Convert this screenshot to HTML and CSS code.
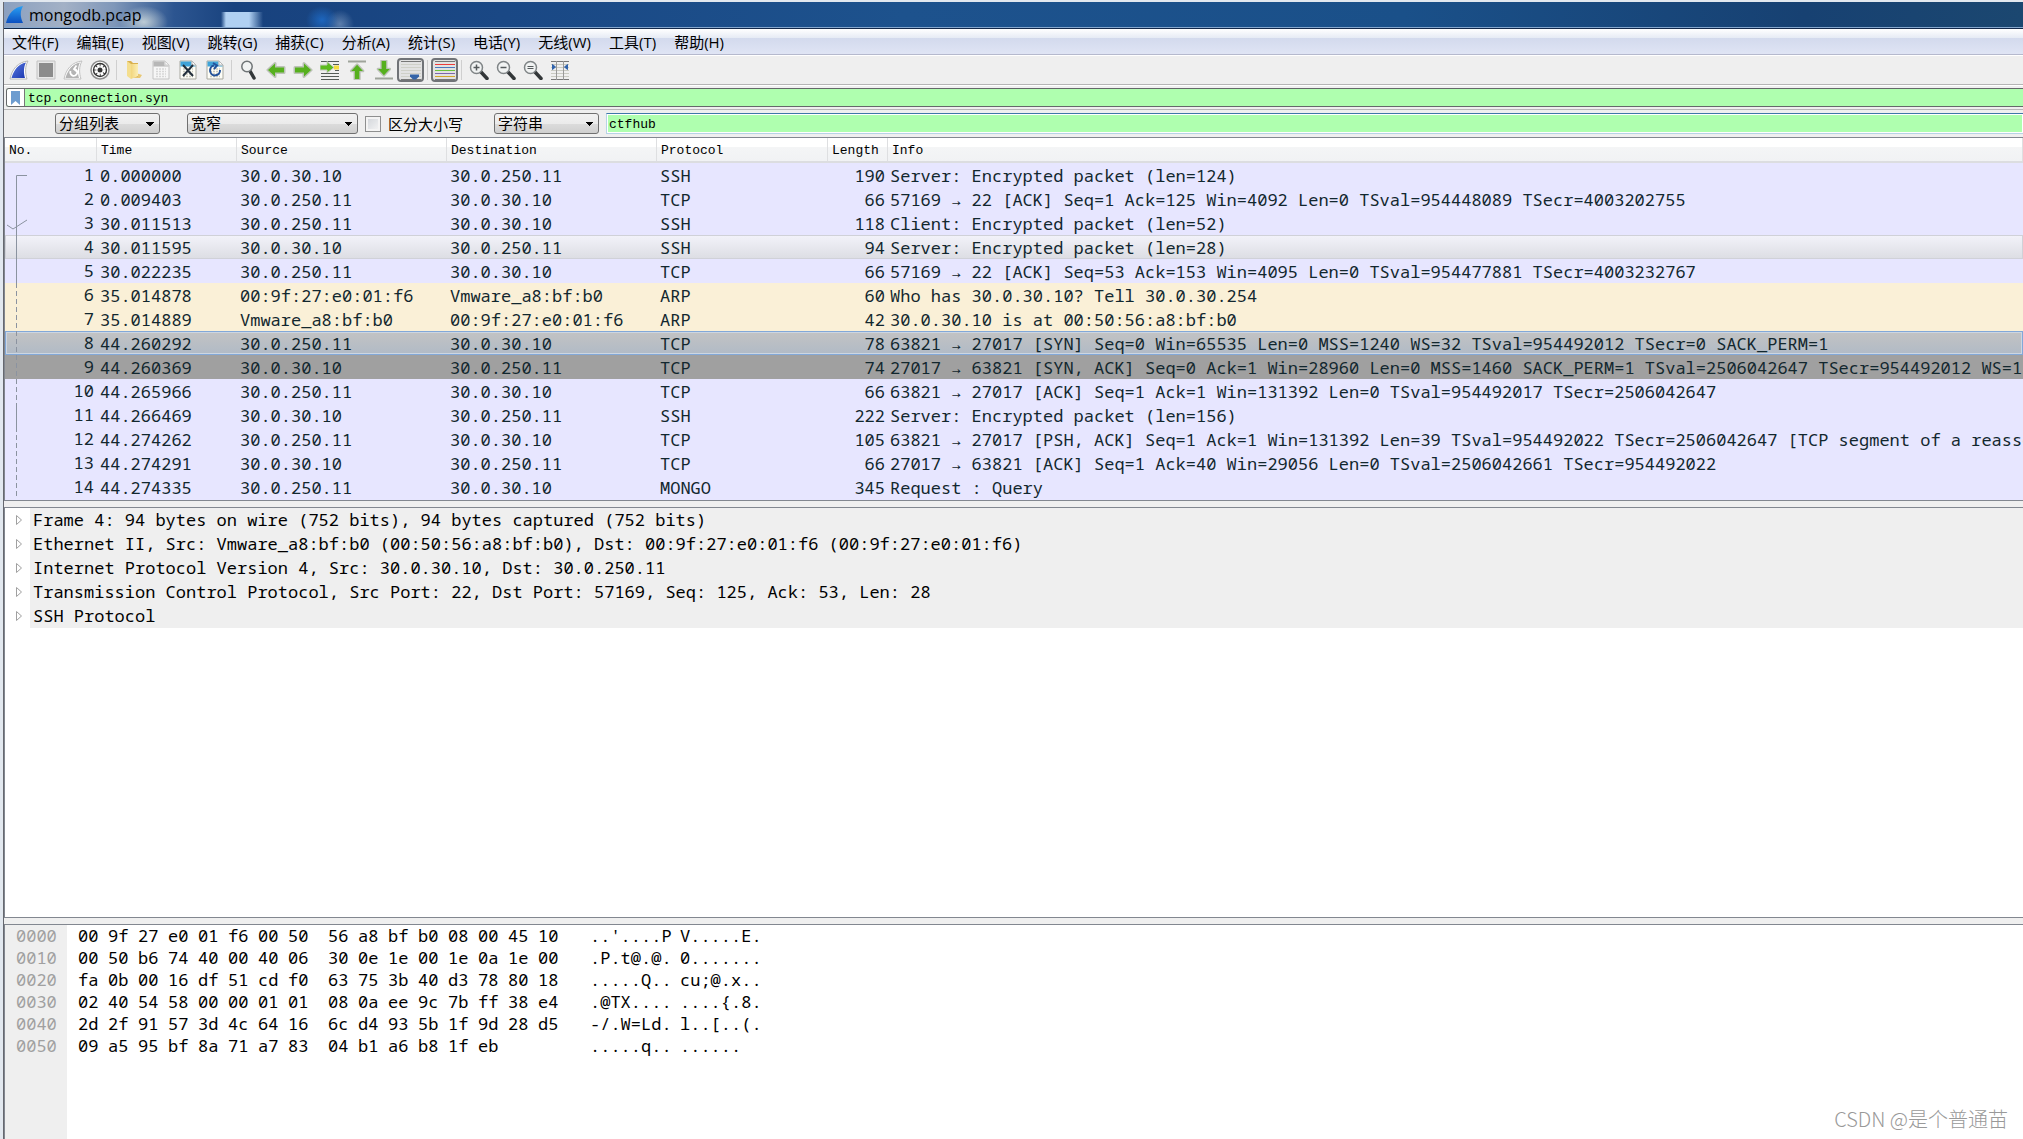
FILE: index.html
```html
<!DOCTYPE html>
<html lang="zh-CN">
<head>
<meta charset="utf-8">
<title>mongodb.pcap</title>
<link rel="stylesheet" href="styles.css">
</head>
<body>
<svg class="defs" aria-hidden="true">
  <defs>
    <linearGradient id="blueFin" x1="0" y1="0" x2="1" y2="1"><stop offset="0" stop-color="#5b7be0"/><stop offset="1" stop-color="#1a36b0"/></linearGradient>
    <linearGradient id="titleFin" x1="0" y1="0" x2="0" y2="1"><stop offset="0" stop-color="#2aa0f4"/><stop offset="1" stop-color="#0b4fc0"/></linearGradient>
    <linearGradient id="folder" x1="0" y1="0" x2="1" y2="0"><stop offset="0" stop-color="#f2d67e"/><stop offset="1" stop-color="#fbeeb4"/></linearGradient>
    <symbol id="line-first" viewBox="0 0 24 24"><path d="M22 12.5H11.500V24" fill="none" stroke="#8b93a0"/></symbol>
    <symbol id="line-solid" viewBox="0 0 24 24"><path d="M11.500 0V24" stroke="#8b93a0"/></symbol>
    <symbol id="line-check" viewBox="0 0 24 24"><path d="M11.500 0V24M2 14l6 4 14-9" fill="none" stroke="#8b93a0"/></symbol>
    <symbol id="line-dash" viewBox="0 0 24 24"><path d="M11.500 0V24" stroke="#8b93a0" stroke-dasharray="5 3"/></symbol>
    <symbol id="page" viewBox="0 0 20 20"><path d="M2 1h12l4 4v14H2z" fill="#fdfdf6" stroke="#a9a9a0"/><path d="M2.500 1.500h11v4h4v1h-15z" fill="#3fa3d8"/><path d="M14 1v4h4z" fill="#fff" stroke="#b5b5b5"/><path d="M5 9h10M5 11.500h10M5 14h10M5 16.500h10" stroke="#c9c9bc" stroke-width="1.500" stroke-dasharray="2 1"/></symbol>
    <symbol id="arrow" viewBox="0 0 20 20"><path d="M2 10l7-6.500v4h9v5H9v4z" fill="#56b01e" stroke="#bcc2b7" stroke-width="3" stroke-linejoin="round"/><path d="M2 10l7-6.500v4h9v5H9v4z" fill="#56b01e"/></symbol>
    <symbol id="lens" viewBox="0 0 20 20"><path d="M12 12l6 6.500" stroke="#333739" stroke-width="3.500" stroke-linecap="round"/><circle cx="7.500" cy="7.500" r="6" fill="#f1f3f3" stroke="#7f8486" stroke-width="1.500"/></symbol>
    <symbol id="twisty" viewBox="0 0 8 12"><path d="M1.500 1.500l5 4.500-5 4.500z" fill="#fff" stroke="#a0a0a0"/></symbol>
  </defs>
</svg>
<div class="window">
  <header class="titlebar">
    <svg class="app-icon" viewBox="0 0 20 20"><path d="M1 18C3 9 9 2 18 1c-3 5-3 11 0 17z" fill="url(#titleFin)"/></svg>
    <h1>mongodb.pcap</h1>
  </header>
  <nav class="menubar">
    <button>文件(F)</button><button>编辑(E)</button><button>视图(V)</button><button>跳转(G)</button><button>捕获(C)</button><button>分析(A)</button><button>统计(S)</button><button>电话(Y)</button><button>无线(W)</button><button>工具(T)</button><button>帮助(H)</button>
  </nav>
  <div class="toolbar">
    <button aria-label="开始捕获"><svg viewBox="0 0 20 20"><path d="M1 19C3 9 9 2 19 1c-3 5-3 12-1 18z" fill="#fff" stroke="#b8b8b8"/><path d="M2.500 18C5 10 9 4 17 2.500c-2.500 4.500-2.500 10.500-1 15.500z" fill="url(#blueFin)"/></svg></button>
    <button aria-label="停止捕获"><svg viewBox="0 0 20 20"><path d="M1 1h18v18H1z" fill="#e8e8e8" stroke="#c2c2c2"/><path d="M3 3h14v14H3z" fill="#8c8c8c"/></svg></button>
    <button aria-label="重新开始"><svg viewBox="0 0 20 20"><path d="M1 19C3 9 9 2 19 1c-3 5-3 12-1 18z" fill="#fff" stroke="#c2c2c2"/><path d="M2.500 18C5 10 9 4 17 2.500c-2.500 4.500-2.500 10.500-1 15.500z" fill="#b4b4b4"/><path d="M7.500 11a3.500 3.500 0 1 0 4.500-2M13.500 5.500L11 9l3 2.500" fill="none" stroke="#fff" stroke-width="1.800"/></svg></button>
    <button aria-label="捕获选项"><svg viewBox="0 0 20 20"><circle cx="10" cy="10" r="9" fill="#fff" stroke="#8e8e8e" stroke-width="1.500"/><circle cx="10" cy="10" r="7.200" fill="#333"/><circle cx="10" cy="10" r="4.500" fill="none" stroke="#fff" stroke-width="2.500" stroke-dasharray="2.700 .83"/><circle cx="10" cy="10" r="3.700" fill="#fff"/><circle cx="10" cy="10" r="2.500" fill="#333"/></svg></button>
    <i class="sep"></i>
    <button aria-label="打开"><svg viewBox="0 0 20 20"><path d="M12 13l6 2-2 3H8z" fill="#e9c873"/><path d="M3 1h4l2 2h5v14H5l-2-2z" fill="#d9b04f"/><path d="M3 1l4 3v15l-4-3z" fill="#f4de8e"/><path d="M7 4h7v12l-7 3z" fill="url(#folder)"/></svg></button>
    <button aria-label="保存"><svg class="faded" viewBox="0 0 20 20"><use href="#page"/></svg></button>
    <button aria-label="关闭"><svg viewBox="0 0 20 20"><use href="#page"/><path d="M5 5l10 11M15 5L5 16" stroke="#23303c" stroke-width="2"/></svg></button>
    <button aria-label="重新加载"><svg viewBox="0 0 20 20"><use href="#page"/><path d="M9 5.500a5 5 0 1 0 6 4.500M8 3l4 2.500L9 9" fill="none" stroke="#24539b" stroke-width="2"/></svg></button>
    <i class="sep"></i>
    <button aria-label="查找"><svg viewBox="0 0 20 20"><path d="M11 11l4 7" stroke="#333739" stroke-width="3.500" stroke-linecap="round"/><circle cx="8" cy="6.500" r="5.200" fill="#f1f3f3" stroke="#6f7476" stroke-width="1.500"/></svg></button>
    <button aria-label="后退"><svg viewBox="0 0 20 20"><use href="#arrow"/></svg></button>
    <button aria-label="前进"><svg viewBox="0 0 20 20"><use href="#arrow" transform="rotate(180 10 10)"/></svg></button>
    <button aria-label="转到分组"><svg viewBox="0 0 20 20"><path d="M1 1.500h18M1 13.500h18M1 16.500h18M1 19.500h18M13 4.500h6M15 10.500h4" stroke="#555b57"/><path d="M14 5.500h5v4h-5z" fill="#f6dc3e"/><path d="M0 5h7V1.500L14 7.500 7 13v-3H0z" fill="#5dbb1f" stroke="#c4c9bf"/></svg></button>
    <button aria-label="首个分组"><svg viewBox="0 0 20 20"><path d="M1 1.500h18" stroke="#9fa49b" stroke-width="2"/><use href="#arrow" transform="translate(0 2) rotate(90 10 10) scale(.9) translate(1 1)"/></svg></button>
    <button aria-label="最新分组"><svg viewBox="0 0 20 20"><path d="M1 18.500h18" stroke="#9fa49b" stroke-width="2"/><use href="#arrow" transform="translate(0 -2) rotate(-90 10 10) scale(.9) translate(1 1)"/></svg></button>
    <button class="checked" aria-label="自动滚动"><svg viewBox="0 0 20 20"><path d="M0 1.500h20M0 19.500h20" stroke="#777"/><path d="M0 4.500h20M0 7.500h20M0 10.500h20M0 13.500h20M0 16.500h20" stroke="#cfd0c8"/><path d="M9 14.500h9v2l-3 3h-3l-3-3z" fill="#3565a8"/></svg></button>
    <i class="sep"></i>
    <button class="checked" aria-label="着色"><svg viewBox="0 0 20 20"><path d="M0 1.500h20M0 19.500h20" stroke="#777"/><path d="M0 4.500h20" stroke="#ee3b3b"/><path d="M0 7.500h20" stroke="#4d79bd"/><path d="M0 10.500h20" stroke="#6cc23d"/><path d="M0 13.500h20" stroke="#7d66ad"/><path d="M0 16.500h20" stroke="#d3a72c"/></svg></button>
    <i class="sep"></i>
    <button aria-label="放大"><svg viewBox="0 0 20 20"><use href="#lens"/><path d="M4.500 7.500h6M7.500 4.500v6" stroke="#555a5c" stroke-width="1.500"/></svg></button>
    <button aria-label="缩小"><svg viewBox="0 0 20 20"><use href="#lens"/><path d="M4.500 7.500h6" stroke="#555a5c" stroke-width="1.500"/></svg></button>
    <button aria-label="正常大小"><svg viewBox="0 0 20 20"><use href="#lens"/><path d="M4.500 6.500h6M4.500 8.500h6" stroke="#555a5c" stroke-width="1.200"/></svg></button>
    <button aria-label="调整列宽"><svg viewBox="0 0 20 20"><path d="M1 1.500h18M1 19.500h18" stroke="#777"/><path d="M1 4.500h18M1 7.500h18M1 10.500h18M1 13.500h18M1 16.500h18" stroke="#c9cac2"/><path d="M6.500 1v19M13.500 1v19" stroke="#999"/><path d="M2.500 4.500l3 2.500-3 2.500zM17.500 4.500l-3 2.500 3 2.500z" fill="#2f62ab" stroke="#2f62ab"/></svg></button>
  </div>
  <div class="filterbar">
    <div class="filter">
      <button class="bookmark" aria-label="书签"><svg viewBox="0 0 9 14"><path d="M0 0h9v14L4.500 10 0 14z" fill="#6d9ccf"/></svg></button>
      <input type="text" aria-label="显示过滤器" value="tcp.connection.syn">
    </div>
  </div>
  <div class="findbar">
    <select class="short" aria-label="搜索范围"><option>分组列表</option></select>
    <select class="long" aria-label="字符宽度"><option>宽窄</option></select>
    <label class="case"><input type="checkbox">区分大小写</label>
    <select class="short" aria-label="搜索类型"><option>字符串</option></select>
    <input class="find" type="text" aria-label="查找" value="ctfhub">
  </div>
  <main>
    <section class="pane packets">
      <table>
        <colgroup><col class="c-no"><col class="c-time"><col class="c-addr"><col class="c-addr"><col class="c-proto"><col class="c-len"><col></colgroup>
        <thead><tr><th>No.</th><th>Time</th><th>Source</th><th>Destination</th><th>Protocol</th><th>Length</th><th>Info</th></tr></thead>
        <tbody>
          <tr><td><div class="no"><svg><use href="#line-first"/></svg>1</div></td><td>0.000000</td><td>30.0.30.10</td><td>30.0.250.11</td><td>SSH</td><td>190</td><td>Server: Encrypted packet (len=124)</td></tr>
          <tr><td><div class="no"><svg><use href="#line-solid"/></svg>2</div></td><td>0.009403</td><td>30.0.250.11</td><td>30.0.30.10</td><td>TCP</td><td>66</td><td>57169 → 22 [ACK] Seq=1 Ack=125 Win=4092 Len=0 TSval=954448089 TSecr=4003202755</td></tr>
          <tr><td><div class="no"><svg><use href="#line-check"/></svg>3</div></td><td>30.011513</td><td>30.0.250.11</td><td>30.0.30.10</td><td>SSH</td><td>118</td><td>Client: Encrypted packet (len=52)</td></tr>
          <tr class="current"><td><div class="no"><svg><use href="#line-solid"/></svg>4</div></td><td>30.011595</td><td>30.0.30.10</td><td>30.0.250.11</td><td>SSH</td><td>94</td><td>Server: Encrypted packet (len=28)</td></tr>
          <tr><td><div class="no"><svg><use href="#line-solid"/></svg>5</div></td><td>30.022235</td><td>30.0.250.11</td><td>30.0.30.10</td><td>TCP</td><td>66</td><td>57169 → 22 [ACK] Seq=53 Ack=153 Win=4095 Len=0 TSval=954477881 TSecr=4003232767</td></tr>
          <tr class="arp"><td><div class="no"><svg><use href="#line-dash"/></svg>6</div></td><td>35.014878</td><td>00:9f:27:e0:01:f6</td><td>Vmware_a8:bf:b0</td><td>ARP</td><td>60</td><td>Who has 30.0.30.10? Tell 30.0.30.254</td></tr>
          <tr class="arp"><td><div class="no"><svg><use href="#line-dash"/></svg>7</div></td><td>35.014889</td><td>Vmware_a8:bf:b0</td><td>00:9f:27:e0:01:f6</td><td>ARP</td><td>42</td><td>30.0.30.10 is at 00:50:56:a8:bf:b0</td></tr>
          <tr class="hover"><td><div class="no"><svg><use href="#line-dash"/></svg>8</div></td><td>44.260292</td><td>30.0.250.11</td><td>30.0.30.10</td><td>TCP</td><td>78</td><td>63821 → 27017 [SYN] Seq=0 Win=65535 Len=0 MSS=1240 WS=32 TSval=954492012 TSecr=0 SACK_PERM=1</td></tr>
          <tr class="syn"><td><div class="no"><svg><use href="#line-dash"/></svg>9</div></td><td>44.260369</td><td>30.0.30.10</td><td>30.0.250.11</td><td>TCP</td><td>74</td><td>27017 → 63821 [SYN, ACK] Seq=0 Ack=1 Win=28960 Len=0 MSS=1460 SACK_PERM=1 TSval=2506042647 TSecr=954492012 WS=128</td></tr>
          <tr><td><div class="no"><svg><use href="#line-dash"/></svg>10</div></td><td>44.265966</td><td>30.0.250.11</td><td>30.0.30.10</td><td>TCP</td><td>66</td><td>63821 → 27017 [ACK] Seq=1 Ack=1 Win=131392 Len=0 TSval=954492017 TSecr=2506042647</td></tr>
          <tr><td><div class="no"><svg><use href="#line-solid"/></svg>11</div></td><td>44.266469</td><td>30.0.30.10</td><td>30.0.250.11</td><td>SSH</td><td>222</td><td>Server: Encrypted packet (len=156)</td></tr>
          <tr><td><div class="no"><svg><use href="#line-dash"/></svg>12</div></td><td>44.274262</td><td>30.0.250.11</td><td>30.0.30.10</td><td>TCP</td><td>105</td><td>63821 → 27017 [PSH, ACK] Seq=1 Ack=1 Win=131392 Len=39 TSval=954492022 TSecr=2506042647 [TCP segment of a reassembled PDU]</td></tr>
          <tr><td><div class="no"><svg><use href="#line-dash"/></svg>13</div></td><td>44.274291</td><td>30.0.30.10</td><td>30.0.250.11</td><td>TCP</td><td>66</td><td>27017 → 63821 [ACK] Seq=1 Ack=40 Win=29056 Len=0 TSval=2506042661 TSecr=954492022</td></tr>
          <tr><td><div class="no"><svg><use href="#line-dash"/></svg>14</div></td><td>44.274335</td><td>30.0.250.11</td><td>30.0.30.10</td><td>MONGO</td><td>345</td><td>Request : Query</td></tr>
        </tbody>
      </table>
    </section>
    <section class="pane tree">
      <details><summary><svg><use href="#twisty"/></svg><span>Frame 4: 94 bytes on wire (752 bits), 94 bytes captured (752 bits)</span></summary></details>
      <details><summary><svg><use href="#twisty"/></svg><span>Ethernet II, Src: Vmware_a8:bf:b0 (00:50:56:a8:bf:b0), Dst: 00:9f:27:e0:01:f6 (00:9f:27:e0:01:f6)</span></summary></details>
      <details><summary><svg><use href="#twisty"/></svg><span>Internet Protocol Version 4, Src: 30.0.30.10, Dst: 30.0.250.11</span></summary></details>
      <details><summary><svg><use href="#twisty"/></svg><span>Transmission Control Protocol, Src Port: 22, Dst Port: 57169, Seq: 125, Ack: 53, Len: 28</span></summary></details>
      <details><summary><svg><use href="#twisty"/></svg><span>SSH Protocol</span></summary></details>
    </section>
    <section class="pane hex">
      <table>
        <tr><th>0000</th><td>00</td><td>9f</td><td>27</td><td>e0</td><td>01</td><td>f6</td><td>00</td><td class="half">50</td><td>56</td><td>a8</td><td>bf</td><td>b0</td><td>08</td><td>00</td><td>45</td><td class="last">10</td><td class="ascii">..'....P</td><td class="ascii">V.....E.</td></tr>
        <tr><th>0010</th><td>00</td><td>50</td><td>b6</td><td>74</td><td>40</td><td>00</td><td>40</td><td class="half">06</td><td>30</td><td>0e</td><td>1e</td><td>00</td><td>1e</td><td>0a</td><td>1e</td><td class="last">00</td><td class="ascii">.P.t@.@.</td><td class="ascii">0.......</td></tr>
        <tr><th>0020</th><td>fa</td><td>0b</td><td>00</td><td>16</td><td>df</td><td>51</td><td>cd</td><td class="half">f0</td><td>63</td><td>75</td><td>3b</td><td>40</td><td>d3</td><td>78</td><td>80</td><td class="last">18</td><td class="ascii">.....Q..</td><td class="ascii">cu;@.x..</td></tr>
        <tr><th>0030</th><td>02</td><td>40</td><td>54</td><td>58</td><td>00</td><td>00</td><td>01</td><td class="half">01</td><td>08</td><td>0a</td><td>ee</td><td>9c</td><td>7b</td><td>ff</td><td>38</td><td class="last">e4</td><td class="ascii">.@TX....</td><td class="ascii">....{.8.</td></tr>
        <tr><th>0040</th><td>2d</td><td>2f</td><td>91</td><td>57</td><td>3d</td><td>4c</td><td>64</td><td class="half">16</td><td>6c</td><td>d4</td><td>93</td><td>5b</td><td>1f</td><td>9d</td><td>28</td><td class="last">d5</td><td class="ascii">-/.W=Ld.</td><td class="ascii">l..[..(.</td></tr>
        <tr><th>0050</th><td>09</td><td>a5</td><td>95</td><td>bf</td><td>8a</td><td>71</td><td>a7</td><td class="half">83</td><td>04</td><td>b1</td><td>a6</td><td>b8</td><td>1f</td><td>eb</td><td></td><td class="last"></td><td class="ascii">.....q..</td><td class="ascii">......</td></tr>
      </table>
    </section>
  </main>
</div>
<p class="watermark">CSDN @是个普通苗</p>
</body>
</html>
```
FILE: styles.css
```css
* { box-sizing: border-box; }

body {
  margin: 0;
  padding: 2px 0 0 3px;
  min-height: 100vh;
  display: flex;
  overflow: hidden;
  position: relative;
  background: #e2e8ef;
  color: #000;
  font-family: "Noto Sans CJK SC", sans-serif;
  font-size: 15px;
}

button, input, select { font: inherit; color: inherit; }
button { border: 0; padding: 0; background: none; }
.defs { position: absolute; width: 0; height: 0; }

.window {
  flex: 1;
  min-width: 0;
  display: flex;
  flex-direction: column;
  border-left: 1px solid #66686f;
  background: #efefef;
}

/* Title bar */
.titlebar {
  height: 27px;
  display: flex;
  align-items: center;
  gap: 4px;
  padding-left: 1px;
  border-bottom: 1px solid #12284a;
  box-shadow: inset 0 -1px #86a8cf;
  background:
    radial-gradient(ellipse 24px 16px at 140px 20px, rgba(215, 225, 225, .8), rgba(215, 225, 225, 0)),
    radial-gradient(ellipse 16px 14px at 318px 18px, rgba(30, 110, 205, .8), rgba(30, 110, 205, 0)),
    radial-gradient(ellipse 14px 14px at 336px 22px, rgba(120, 150, 190, .7), rgba(120, 150, 190, 0)),
    linear-gradient(90deg, rgba(176, 208, 242, 0), #b0d0f2 5px, #b0d0f2 28px, rgba(176, 208, 242, 0)) 217px 10px / 42px 16px no-repeat,
    linear-gradient(90deg, #8ba0bf 0, #a3b1c6 60px, #7f97b9 110px, #2c5590 170px, #18427e 230px, #1a4885 500px, #1d528d 900px, #1a5089 1400px, #174172 1800px, #1b4770 100%);
}
.titlebar h1 {
  margin: 0;
  font: 16px/24px "Open Sans", "Noto Sans", sans-serif;
}
.app-icon { width: 20px; height: 20px; }

/* Menus */
.menubar {
  height: 27px;
  display: flex;
  align-items: center;
  gap: 18px;
  padding-left: 8px;
  border-bottom: 1px solid #fff;
  box-shadow: inset 0 -1px #b5b9cd;
  background: linear-gradient(#fff 0, #e6ebf5 34%, #d3daed 35%, #e0e5f5 100%);
  font-family: "Open Sans", "Noto Sans CJK SC", sans-serif;
  line-height: 24px;
}
.menubar button { white-space: nowrap; }

/* Toolbar */
.toolbar {
  height: 30px;
  display: flex;
  align-items: center;
  padding: 0 0 2px 1px;
  border-bottom: 1px solid #fff;
  box-shadow: inset 0 -1px #b4b4b4;
}
.toolbar button {
  width: 27px;
  height: 24px;
  display: grid;
  place-items: center;
}
.toolbar svg { width: 20px; height: 20px; }
.toolbar .faded { filter: grayscale(1); opacity: .6; }
.toolbar .checked {
  border: 2px solid #707377;
  border-radius: 4px;
  background: #e2e2e2;
}
.sep {
  width: 7px;
  height: 20px;
  background: linear-gradient(#cfcfcf, #cfcfcf) center / 1px 100% no-repeat;
}

/* Display filter */
.filterbar {
  padding: 2px 0 2px 2px;
  border-bottom: 1px solid #b8b8b8;
}
.filter {
  height: 19px;
  display: flex;
  border: 1px solid #66686a;
  border-right: 0;
  border-radius: 3px 0 0 3px;
  background: #afffaf;
}
.bookmark {
  width: 18px;
  display: grid;
  place-items: center;
  border-right: 1px solid #777;
  border-radius: 2px 0 0 2px;
  background: #fff;
}
.bookmark svg { width: 9px; height: 14px; }
.filter input {
  flex: 1;
  min-width: 0;
  border: 0;
  padding: 2px 3px 0;
  background: none;
  font: 13px/15px "Liberation Mono", monospace;
}

/* Find bar */
.findbar {
  height: 27px;
  display: flex;
  align-items: center;
  padding-left: 51px;
}
.findbar select {
  height: 21px;
  appearance: none;
  padding: 0 3px 2px;
  border: 1px solid #707070;
  border-radius: 3px;
  line-height: 17px;
  background:
    linear-gradient(45deg, transparent 50%, #000 50%) right 9px center / 4px 4px no-repeat,
    linear-gradient(-45deg, transparent 50%, #000 50%) right 5px center / 4px 4px no-repeat,
    linear-gradient(#f2f2f2, #ebebeb 50%, #dcdcdc 51%, #cfcfcf);
}
.findbar .short { width: 105px; }
.findbar .long { width: 171px; margin-left: 27px; }
.case {
  display: flex;
  align-items: center;
  gap: 7px;
  margin: 0 31px 0 7px;
  line-height: 20px;
}
.case input {
  appearance: none;
  width: 16px;
  height: 16px;
  margin: 0;
  border: 1px solid #8e8f8f;
  background: linear-gradient(135deg, #cfd3d8, #f6f6f6);
  box-shadow: inset 0 0 0 2px #f4f4f4;
}
.find {
  flex: 1;
  min-width: 0;
  height: 21px;
  margin-left: 7px;
  padding: 2px 2px 0;
  border: 1px solid #b7d3e6;
  border-top-color: #3f77a8;
  border-right: 0;
  background: #afffaf;
  box-shadow: inset 0 0 0 1px #fff;
  font: 13px/15px "Liberation Mono", monospace;
}

/* Panes */
main {
  flex: 1;
  display: flex;
  flex-direction: column;
  gap: 6px;
}
.pane {
  border: 1px solid #828790;
  border-right: 0;
  background: #fff;
  font: 17px/24px "Noto Sans Mono", "Liberation Mono", monospace;
  overflow: hidden;
}
.pane table { border-collapse: collapse; }

.packets { background: #e7e6ff; padding-bottom: 1px; }
.packets table { width: 100%; table-layout: fixed; }
.c-no { width: 92px; }
.c-time { width: 140px; }
.c-addr { width: 210px; }
.c-proto { width: 171px; }
.c-len { width: 60px; }
.packets th {
  height: 24px;
  padding: 3px 4px 0;
  text-align: left;
  white-space: nowrap;
  border-bottom: 2px solid #dcdde0;
  box-shadow: inset -1px 0 #dedfe1;
  background: linear-gradient(#fff 40%, #f4f5f6 41%, #f1f2f4);
  font: 13px/20px "Liberation Mono", monospace;
}
.packets td {
  height: 24px;
  padding: 0 3px;
  line-height: 23px;
  white-space: nowrap;
  overflow: hidden;
  color: #12272e;
}
.packets td:nth-child(6) { text-align: right; }
.packets td:first-child { padding-left: 0; }
.packets td:last-child { padding-left: 2px; }
.no { height: 24px; display: flex; justify-content: space-between; }
.no svg { width: 24px; height: 24px; }
.arp { background: #faf0d7; }
.syn { background: #a0a0a0; }
.current {
  background: linear-gradient(#f3f3fa, #dcdde3);
  box-shadow: inset 0 0 0 1px #d0d1d8;
}
.hover {
  background: linear-gradient(#c3c3c3, #b0bac6);
  box-shadow: inset 0 0 0 1px #82a8d8, inset 0 0 0 2px #ccd6e2;
}

.tree { flex: 1; }
.tree summary {
  display: grid;
  grid-template-columns: 25px 1fr;
  align-items: center;
}
.tree svg { width: 8px; height: 12px; justify-self: end; margin-right: 7px; }
.tree span {
  height: 24px;
  padding-left: 3px;
  background: #efefef;
  white-space: nowrap;
}

.hex {
  min-height: 215px;
  border-bottom: 0;
  line-height: 22px;
  background: linear-gradient(90deg, #efefef 62px, #fff 62px);
}
.hex th {
  width: 73px;
  padding: 0 0 0 11px;
  text-align: left;
  font-weight: 400;
  color: #a0a0a0;
}
.hex td { width: 30px; padding: 0; }
.hex .half { width: 40px; }
.hex .last { width: 52px; }
.hex .ascii { width: 90px; }

.watermark {
  position: absolute;
  right: 15px;
  bottom: 5px;
  margin: 0;
  font-size: 20px;
  font-weight: 300;
  line-height: 30px;
  color: #999;
}
```
